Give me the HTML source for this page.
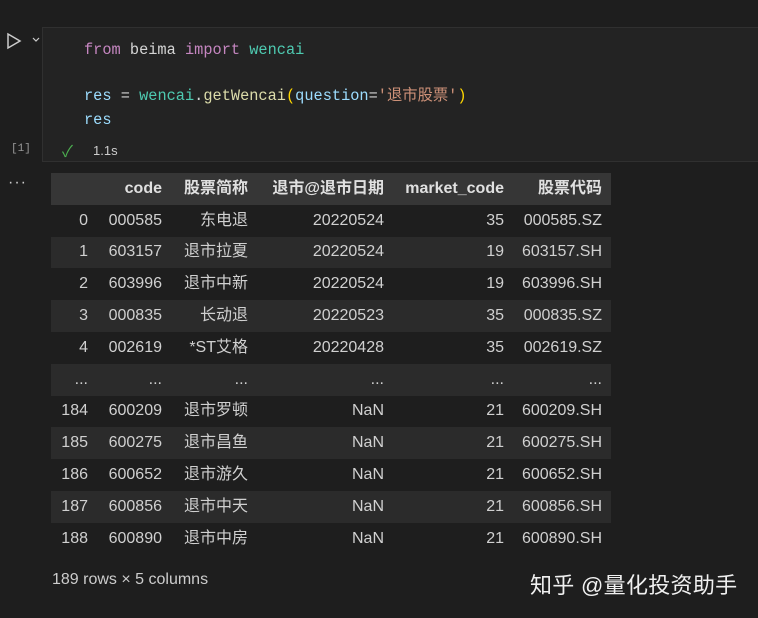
<!DOCTYPE html>
<html><head><meta charset="utf-8"><style>
body{margin:0;width:758px;height:618px;background:#1e1e1e;overflow:hidden;position:relative;font-family:"Liberation Sans","Noto Sans CJK SC",sans-serif;color:#ccc}
.cell{position:absolute;left:42px;top:27px;width:716px;height:135px;background:#232323;border:1px solid #303030;border-right:none;box-sizing:border-box}
.code{position:absolute;left:84px;font-family:"Liberation Mono","Noto Sans CJK SC",monospace;font-size:15.3px;line-height:20px;color:#d4d4d4;white-space:pre}
.kw{color:#c586c0}.fn{color:#4ec9b0}.v{color:#9cdcfe}.f{color:#dcdcaa}.s{color:#ce9178}.p{color:#ffd700}
table{position:absolute;left:51px;top:173px;border-collapse:collapse;font-size:16px;table-layout:fixed;width:560px}
td,th{height:31.8px;line-height:20px;padding:0 9px 0 0;text-align:right;white-space:nowrap;color:#d0d0d0;vertical-align:middle;box-sizing:border-box;overflow:hidden}
th{font-weight:bold;background:#363636;color:#e0e0e0}
tr:nth-child(odd) td{background:#2b2b2b}
</style></head><body>
<svg style="position:absolute;left:6px;top:32px" width="34" height="18"><path d="M2 2 L14 9 L2 16 Z" fill="none" stroke="#ccc" stroke-width="1.5"/><path d="M27 6 L30 9 L33 6" fill="none" stroke="#ccc" stroke-width="1.2"/></svg>
<div class="cell"></div>
<div class="code" style="top:40px"><span class="kw">from</span> beima <span class="kw">import</span> <span class="fn">wencai</span></div>
<div class="code" style="top:86px"><span class="v">res</span> = <span class="fn">wencai</span>.<span class="f">getWencai</span><span class="p">(</span><span class="v">question</span>=<span class="s">'退市股票'</span><span class="p">)</span></div>
<div class="code" style="top:110px"><span class="v">res</span></div>
<div style="position:absolute;left:11px;top:143px;font-size:11px;color:#999;font-family:'Liberation Mono',monospace">[1]</div>
<div style="position:absolute;left:62px;top:138px;color:#4caf50;font-size:16px">✓</div>
<div style="position:absolute;left:93px;top:143px;font-size:13px;color:#ccc">1.1s</div>
<div style="position:absolute;left:8px;top:174px;font-size:16px;color:#ccc;letter-spacing:1px">···</div>
<table>
<colgroup><col style="width:46px"><col style="width:74px"><col style="width:86px"><col style="width:136px"><col style="width:120px"><col style="width:98px"></colgroup>
<tr><th></th><th>code</th><th>股票简称</th><th>退市@退市日期</th><th>market_code</th><th>股票代码</th></tr>
<tr><td>0</td><td>000585</td><td>东电退</td><td>20220524</td><td>35</td><td>000585.SZ</td></tr>
<tr><td>1</td><td>603157</td><td>退市拉夏</td><td>20220524</td><td>19</td><td>603157.SH</td></tr>
<tr><td>2</td><td>603996</td><td>退市中新</td><td>20220524</td><td>19</td><td>603996.SH</td></tr>
<tr><td>3</td><td>000835</td><td>长动退</td><td>20220523</td><td>35</td><td>000835.SZ</td></tr>
<tr><td>4</td><td>002619</td><td>*ST艾格</td><td>20220428</td><td>35</td><td>002619.SZ</td></tr>
<tr><td>...</td><td>...</td><td>...</td><td>...</td><td>...</td><td>...</td></tr>
<tr><td>184</td><td>600209</td><td>退市罗顿</td><td>NaN</td><td>21</td><td>600209.SH</td></tr>
<tr><td>185</td><td>600275</td><td>退市昌鱼</td><td>NaN</td><td>21</td><td>600275.SH</td></tr>
<tr><td>186</td><td>600652</td><td>退市游久</td><td>NaN</td><td>21</td><td>600652.SH</td></tr>
<tr><td>187</td><td>600856</td><td>退市中天</td><td>NaN</td><td>21</td><td>600856.SH</td></tr>
<tr><td>188</td><td>600890</td><td>退市中房</td><td>NaN</td><td>21</td><td>600890.SH</td></tr>
</table>
<div style="position:absolute;left:52px;top:571px;font-size:16px;color:#ccc">189 rows × 5 columns</div>
<div style="position:absolute;left:530px;top:568px;font-size:22px;letter-spacing:0.3px;color:#f0f0f0">知乎 @量化投资助手</div>
</body></html>
